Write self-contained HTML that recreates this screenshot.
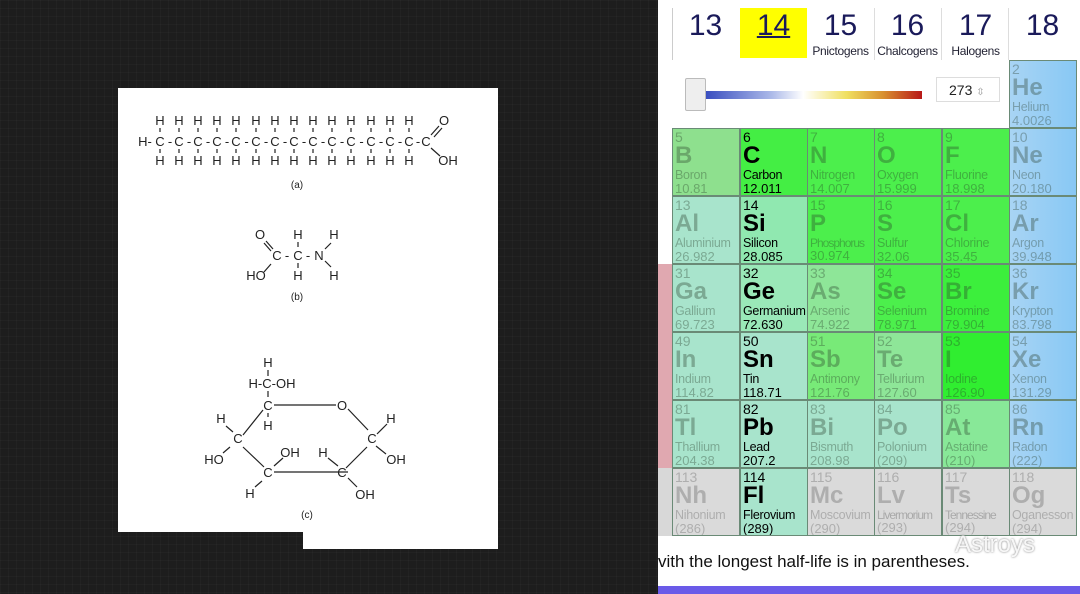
<!DOCTYPE html>
<html><head><meta charset="utf-8"><style>
*{margin:0;padding:0;box-sizing:border-box}
body{width:1080px;height:594px;overflow:hidden;background:#1d1d1d;font-family:"Liberation Sans",sans-serif;position:relative}
.a{position:absolute}
.cell{position:absolute;width:68px;height:68px;border:1px solid #6a8a76;overflow:hidden;padding-left:2px;line-height:1}
.cell .n{font-size:14px;margin-top:1px}
.cell .s{font-size:24px;font-weight:bold;margin-top:0px}
.cell .m{font-size:12.5px;margin-top:1px;white-space:nowrap;letter-spacing:-0.3px}
.cell .w{font-size:13px;margin-top:0px}
.f{color:rgba(40,60,40,0.35)}
.k{color:#000}
.hd{position:absolute;top:8px;width:67px;height:50px;text-align:center;color:#1a1a5a}
.hd b{display:block;font-weight:normal;font-size:30px;line-height:36px}
.hd i{display:block;font-style:normal;font-size:12px;color:#223;letter-spacing:-0.3px}
</style></head><body>
<div class="a" style="left:0;top:0;width:658px;height:594px;background-image:linear-gradient(rgba(255,255,255,0.025) 1px,transparent 1px),linear-gradient(90deg,rgba(255,255,255,0.025) 1px,transparent 1px);background-size:8px 8px"></div>
<div class="a" style="left:118px;top:88px;width:380px;height:444px;background:#fff"></div>
<div class="a" style="left:303px;top:531px;width:195px;height:18px;background:#fff"></div>
<svg class="a" style="left:0;top:0" width="658" height="594" font-family="Liberation Sans,sans-serif" font-size="13" fill="#222" text-anchor="middle">
<text x="145" y="146">H-</text>
<g id="ch"></g>
<text x="444" y="125">O</text><text x="448" y="165">OH</text>
<path d="M431 135 L439 126 M434 137 L442 128 M431 148 L440 156" stroke="#222" stroke-width="1.2"/>
<text x="297" y="188" font-size="10">(a)</text>
<text x="260" y="239">O</text><text x="298" y="239">H</text><text x="334" y="239">H</text>
<text x="277" y="260">C</text><text x="287" y="260">-</text><text x="298" y="260">C</text><text x="308" y="260">-</text><text x="319" y="260">N</text>
<text x="256" y="280">HO</text><text x="298" y="280">H</text><text x="334" y="280">H</text>
<path d="M264 243 L271 251 M266 241 L273 249 M264 272 L271 264 M298 242v5M298 263v5 M325 249 L331 243 M325 261 L331 267" stroke="#222" stroke-width="1.2"/>
<text x="297" y="300" font-size="10">(b)</text>
<text x="268" y="367">H</text><text x="272" y="388">H-C-OH</text>
<text x="268" y="410">C</text><text x="342" y="410">O</text><text x="268" y="430">H</text>
<text x="221" y="423">H</text><text x="238" y="443">C</text><text x="214" y="464">HO</text>
<text x="290" y="457">OH</text><text x="323" y="457">H</text>
<text x="268" y="477">C</text><text x="342" y="477">C</text>
<text x="250" y="498">H</text><text x="365" y="499">OH</text>
<text x="391" y="423">H</text><text x="372" y="443">C</text><text x="396" y="464">OH</text>
<g stroke="#222" stroke-width="1.2" fill="none">
<path d="M268 370v6M268 391v6M268 413v4M274 405H336M348 409L368 430M377 434L387 424M376 446L386 454M367 447L346 468M348 472H274M264 467L243 447M243 435L263 410M226 426L233 432M230 447L223 453M274 466L283 458M262 481L255 487M338 466L328 458M348 478L357 487"/>
</g>
<text x="307" y="518" font-size="10">(c)</text>
</svg>
<script>
(function(){var xs=[160,179,198,217,236,256,275,294,313,332,351,371,390,409,426],s="";
xs.forEach(function(x,i){s+='<text x="'+x+'" y="146">C</text>';if(i<14){s+='<text x="'+(x+(xs[i+1]-x)/2+0.5)+'" y="146">-</text>';s+='<text x="'+x+'" y="125">H</text><text x="'+x+'" y="165">H</text><path d="M'+x+' 128v4M'+x+' 149v4" stroke="#222" stroke-width="1.2"/>';}});
document.getElementById("ch").innerHTML=s;})();
</script>

<div class="a" style="left:658px;top:0;width:422px;height:594px;background:#fff"></div>
<div class="a" style="left:740px;top:8px;width:67px;height:50px;background:#ffff00"></div>
<div class="hd" style="left:672px"><b>13</b></div>
<div class="hd" style="left:740px"><b style="text-decoration:underline;text-decoration-thickness:2px">14</b></div>
<div class="hd" style="left:807px"><b>15</b><i>Pnictogens</i></div>
<div class="hd" style="left:874px"><b>16</b><i>Chalcogens</i></div>
<div class="hd" style="left:942px"><b>17</b><i>Halogens</i></div>
<div class="hd" style="left:1009px"><b>18</b></div>
<div class="a" style="left:672px;top:8px;width:1px;height:52px;background:#ccc"></div>
<div class="a" style="left:874px;top:8px;width:1px;height:52px;background:#ddd"></div>
<div class="a" style="left:941px;top:8px;width:1px;height:52px;background:#ddd"></div>
<div class="a" style="left:1008px;top:8px;width:1px;height:52px;background:#ddd"></div>
<div class="a" style="left:706px;top:91px;width:216px;height:8px;background:linear-gradient(90deg,#3a4fc0,#aab8e8 30%,#fff 45%,#f0e060 65%,#d89030 82%,#b81818)"></div>
<div class="a" style="left:685px;top:78px;width:21px;height:33px;background:#eee;border:1px solid #bbb;border-radius:2px"></div>
<div class="a" style="left:936px;top:77px;width:64px;height:25px;border:1px solid #ddd;font-size:14px;padding:4px 0 0 12px;color:#222">273 <span style="font-size:10px;color:#999">⇳</span></div>
<div class="a" style="left:658px;top:264px;width:14px;height:204px;background:#e0a8b0"></div>
<div class="a" style="left:658px;top:468px;width:14px;height:68px;background:#d8d8d8"></div>

<div class="cell" style="left:1009px;top:60px;background:linear-gradient(90deg,#a8d4f4,#88c8f4)"><div class="n f">2</div><div class="s f">He</div><div class="m f">Helium</div><div class="w f">4.0026</div></div>

<div id="t"></div>
<script>
var rows=[
[["5","B","Boron","10.81","#8ee08e"],["6","C","Carbon","12.011","#44ee44",1],["7","N","Nitrogen","14.007","#4cef4c"],["8","O","Oxygen","15.999","#4cef4c"],["9","F","Fluorine","18.998","#4cef4c"],["10","Ne","Neon","20.180","B"]],
[["13","Al","Aluminium","26.982","#a8e4cc"],["14","Si","Silicon","28.085","#90e8b0",1],["15","P","Phosphorus","30.974","#4cef4c"],["16","S","Sulfur","32.06","#4cef4c"],["17","Cl","Chlorine","35.45","#4cef4c"],["18","Ar","Argon","39.948","B"]],
[["31","Ga","Gallium","69.723","#a8e4cc"],["32","Ge","Germanium","72.630","#9ae8b8",1],["33","As","Arsenic","74.922","#8ee698"],["34","Se","Selenium","78.971","#4cef4c"],["35","Br","Bromine","79.904","#3cef3c"],["36","Kr","Krypton","83.798","B"]],
[["49","In","Indium","114.82","#a8e4cc"],["50","Sn","Tin","118.71","#a8e4cc",1],["51","Sb","Antimony","121.76","#78ea78"],["52","Te","Tellurium","127.60","#8ee698"],["53","I","Iodine","126.90","#30ee30"],["54","Xe","Xenon","131.29","B"]],
[["81","Tl","Thallium","204.38","#a8e4cc"],["82","Pb","Lead","207.2","#a8e4cc",1],["83","Bi","Bismuth","208.98","#a8e4cc"],["84","Po","Polonium","(209)","#a8e4cc"],["85","At","Astatine","(210)","#88e898"],["86","Rn","Radon","(222)","B"]],
[["113","Nh","Nihonium","(286)","#dadada"],["114","Fl","Flerovium","(289)","#a8e4cc",1],["115","Mc","Moscovium","(290)","#dadada"],["116","Lv","Livermorium","(293)","#dadada"],["117","Ts","Tennessine","(294)","#dadada"],["118","Og","Oganesson","(294)","#dadada"]]];
var xs=[672,740,807,874,942,1009],h="";
rows.forEach(function(r,i){r.forEach(function(c,j){
var bg=c[4]=="B"?"linear-gradient(90deg,#a8d4f4,#88c8f4)":"linear-gradient(135deg,"+c[4]+","+c[4]+")";
var cl=c[5]?"k":"f";
var grey=c[4]=="#dadada"&&!c[5];
var st=grey?' style="color:rgba(120,120,120,0.45)"':"";
var sm=c[2].length>9?' style="letter-spacing:-1px;font-size:12px'+(grey?';color:rgba(120,120,120,0.5)':'')+'"':st;
h+='<div class="cell" style="left:'+xs[j]+'px;top:'+(128+i*68)+'px;background:'+bg+'"><div class="n '+cl+'"'+st+'>'+c[0]+'</div><div class="s '+cl+'"'+st+'>'+c[1]+'</div><div class="m '+cl+'"'+sm+'>'+c[2]+'</div><div class="w '+cl+'"'+st+'>'+c[3]+'</div></div>';
});});
document.getElementById("t").innerHTML=h;
</script>
<div class="a" style="left:658px;top:552px;font-size:17px;color:#111;white-space:nowrap">vith the longest half-life is in parentheses.</div>
<div class="a" style="left:955px;top:531px;font-size:24px;color:rgba(255,255,255,0.9);text-shadow:0 0 2px #777">Astroys</div>
<div class="a" style="left:658px;top:586px;width:422px;height:8px;background:#6a5ae8"></div>
</body></html>
